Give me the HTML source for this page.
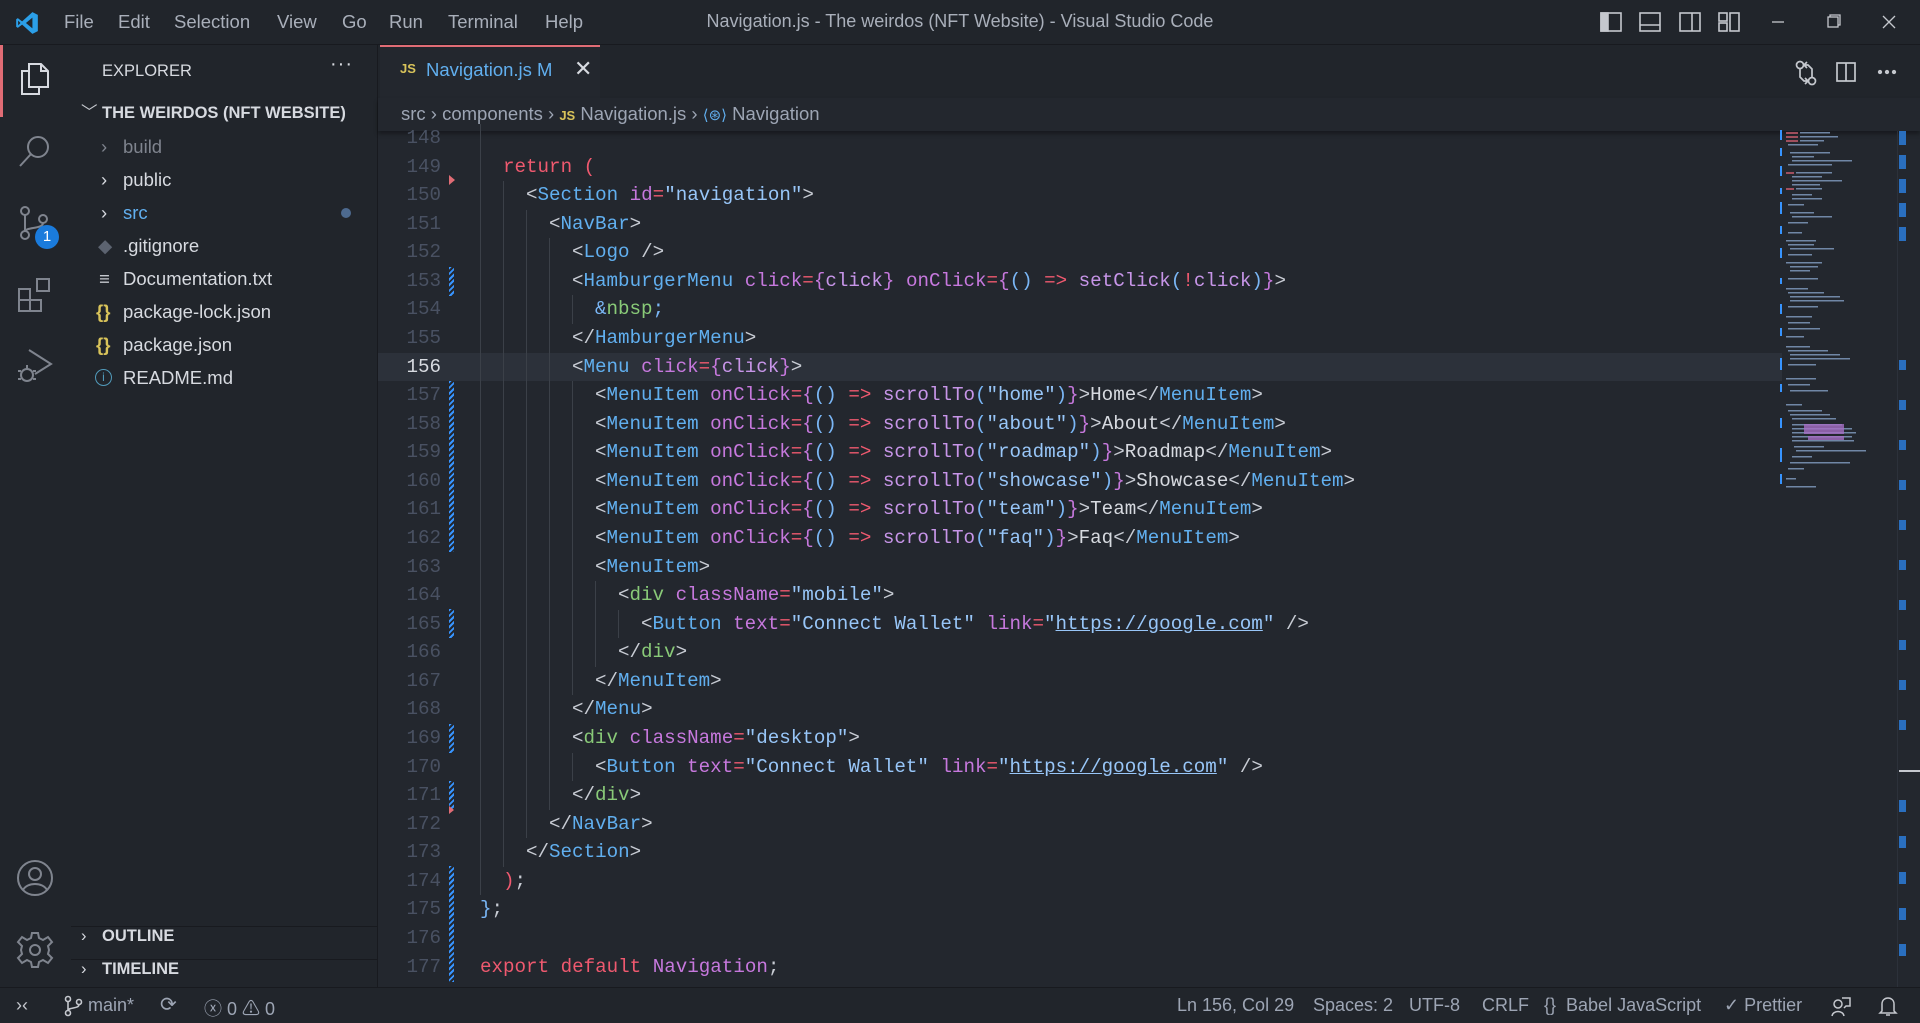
<!DOCTYPE html>
<html><head><meta charset="utf-8"><style>
*{margin:0;padding:0;box-sizing:border-box}
body{width:1920px;height:1023px;overflow:hidden;background:#23272e;font-family:"Liberation Sans",sans-serif;color:#d7dae0;position:relative}
.abs{position:absolute}
#title{left:0;top:0;width:1920px;height:45px;background:#21252b;border-bottom:1px solid #181a1f}
#title .m{position:absolute;top:11px;font-size:18.5px;color:#a9afba}
#title .t{position:absolute;top:11px;left:0;width:1920px;text-align:center;font-size:18px;color:#a9afba}
#act{left:0;top:45px;width:71px;height:942px;background:#21252b}
#side{left:71px;top:45px;width:307px;height:942px;background:#21252b;border-right:1px solid #181a1f}
.row{position:absolute;left:0;width:307px;height:33px;font-size:18.5px;line-height:33px;color:#d7dae0}
#tabs{left:378px;top:45px;width:1542px;height:53px;background:#21252b}
#tab{left:380px;top:45px;width:220px;height:53px;background:#23272e;border-top:2px solid #e06c75}
#crumb{left:378px;top:98px;width:1542px;height:33px;background:#23272e;font-size:18.5px;color:#9da5b4;box-shadow:0 3px 4px rgba(0,0,0,.35)}
#code{left:378px;top:124px;font-family:"Liberation Mono",monospace;font-size:19.2px}
.ln{position:absolute;left:0;width:1404px;height:28.57px;line-height:28.57px;white-space:pre}
.ln .n{position:absolute;left:0;width:63px;text-align:right;color:#495162}
.ln .c{position:absolute;left:102px;display:flex}
.ln.cur{background:#2c313a}
.ln.cur .n{color:#d7dae0}
i{display:inline-block;width:23px;height:28.57px;border-left:1px solid #3b4048}
.t{color:#61afef}.a{color:#c678dd}.o{color:#ef596f}.s{color:#98c6f8}.p{color:#c8ccd4}.b{color:#c678dd}.f{color:#c795e8}.k{color:#ef596f}.g{color:#89ca78}.w{color:#d7dae0}.pr{color:#7ab6f5}
.u{text-decoration:underline}
.dec{position:absolute;left:449px;width:5px;background:repeating-linear-gradient(135deg,#3794ff 0 2px,#23272e 2px 4px)}
#status{left:0;top:987px;width:1920px;height:36px;background:#21252b;border-top:1px solid #181a1f;font-size:18px;color:#9da5b4}
#status span{position:absolute;top:7px}
</style></head><body>

<div id="title" class="abs">
<svg class="abs" style="left:14px;top:10px" width="26" height="26" viewBox="0 0 24 24"><path d="M17 2 L22 4.5 V19.5 L17 22 L7.5 13.5 L3.5 16.5 L2 15.5 V8.5 L3.5 7.5 L7.5 10.5 Z M17 7 L11 12 L17 17 Z M3.8 9.8 V14.2 L6 12 Z" fill="#2b9fe8" fill-rule="evenodd"/></svg>
<span class="m" style="left:64px">File</span><span class="m" style="left:118px">Edit</span><span class="m" style="left:174px">Selection</span><span class="m" style="left:277px">View</span><span class="m" style="left:342px">Go</span><span class="m" style="left:389px">Run</span><span class="m" style="left:448px">Terminal</span><span class="m" style="left:545px">Help</span>
<div class="t">Navigation.js - The weirdos (NFT Website) - Visual Studio Code</div>
<svg class="abs" style="left:1600px;top:12px" width="150" height="22" fill="none" stroke="#c5c8ce" stroke-width="1.6">
<rect x="1" y="1" width="20" height="18"/><rect x="1" y="1" width="7" height="18" fill="#c5c8ce"/>
<rect x="40" y="1" width="20" height="18"/><line x1="40" y1="13" x2="60" y2="13"/>
<rect x="80" y="1" width="20" height="18"/><line x1="92" y1="1" x2="92" y2="19"/>
<rect x="119" y="1" width="8" height="8"/><rect x="119" y="11" width="8" height="8"/><rect x="130" y="1" width="9" height="18"/>
</svg>
<svg class="abs" style="left:1770px;top:14px" width="140" height="18" fill="none" stroke="#c5c8ce" stroke-width="1.3">
<line x1="2" y1="8" x2="14" y2="8"/><rect x="58" y="3" width="10" height="10"/><path d="M60 3 V1 H70 V11 H68"/><path d="M113 2 L125 14 M125 2 L113 14"/>
</svg>
</div>

<div id="act" class="abs">
<div class="abs" style="left:0;top:0;width:3px;height:72px;background:#e06c75"></div>
<svg class="abs" style="left:17px;top:16px" width="36" height="36" fill="none" stroke="#d7dae0" stroke-width="2"><path d="M12 3 H24 L31 10 V26 H12 Z M24 3 V10 H31"/><path d="M12 10 H5 V33 H22 V26"/></svg>
<svg class="abs" style="left:17px;top:88px" width="36" height="36" fill="none" stroke="#7f848e" stroke-width="2"><circle cx="21" cy="14" r="10"/><path d="M14 21 L3 33"/></svg>
<svg class="abs" style="left:17px;top:160px" width="36" height="36" fill="none" stroke="#7f848e" stroke-width="2"><circle cx="8" cy="6" r="4"/><circle cx="8" cy="30" r="4"/><circle cx="26" cy="14" r="4"/><path d="M8 10 V26 M26 18 C26 24 10 22 8 26"/></svg>
<div class="abs" style="left:35px;top:180px;width:24px;height:24px;border-radius:50%;background:#1a7bdc;color:#fff;font-size:15px;text-align:center;line-height:24px">1</div>
<svg class="abs" style="left:17px;top:232px" width="36" height="36" fill="none" stroke="#7f848e" stroke-width="2"><path d="M2 12 H13 V34 H2 Z M2 23 H24 V34 H13"/><rect x="20" y="2" width="12" height="12"/></svg>
<svg class="abs" style="left:17px;top:302px" width="38" height="38" fill="none" stroke="#7f848e" stroke-width="2"><path d="M12 3 L34 17 L18 27"/><circle cx="10" cy="28" r="6"/><path d="M4 24 H1 M4 32 H1 M16 24 H19 M16 32 H19 M10 22 V18"/></svg>
<svg class="abs" style="left:15px;top:813px" width="40" height="40" fill="none" stroke="#7f848e" stroke-width="2"><circle cx="20" cy="20" r="17"/><circle cx="20" cy="16" r="6"/><path d="M8 32 C12 24 28 24 32 32"/></svg>
<svg class="abs" style="left:15px;top:885px" width="40" height="40" fill="none" stroke="#7f848e" stroke-width="2"><circle cx="20" cy="20" r="5"/><path d="M17 3 H23 L24 8 L28 10 L33 7 L37 12 L33 16 L34 20 L33 24 L37 28 L33 33 L28 30 L24 32 L23 37 H17 L16 32 L12 30 L7 33 L3 28 L7 24 L6 20 L7 16 L3 12 L7 7 L12 10 L16 8 Z"/></svg>
</div>

<div id="side" class="abs">
<div class="abs" style="left:31px;top:17px;font-size:16.5px;color:#d7dae0">EXPLORER</div>
<div class="abs" style="left:259px;top:8px;font-size:20px;color:#d7dae0;letter-spacing:1px">···</div>
<div class="row" style="top:52px;font-weight:bold;font-size:16.5px"><span style="position:absolute;left:10px;color:#c5c8ce;font-weight:normal">﹀</span><span style="position:absolute;left:31px">THE WEIRDOS (NFT WEBSITE)</span></div>
<div class="row" style="top:85px;color:#7f848e"><span style="position:absolute;left:30px">›</span><span style="position:absolute;left:52px">build</span></div>
<div class="row" style="top:118px"><span style="position:absolute;left:30px">›</span><span style="position:absolute;left:52px">public</span></div>
<div class="row" style="top:151px;color:#61afef"><span style="position:absolute;left:30px;color:#d7dae0">›</span><span style="position:absolute;left:52px">src</span><span style="position:absolute;left:270px;top:12px;width:10px;height:10px;border-radius:50%;background:#4d6a8f"></span></div>
<div class="row" style="top:184px"><span style="position:absolute;left:27px;color:#5c6370">◆</span><span style="position:absolute;left:52px">.gitignore</span></div>
<div class="row" style="top:217px"><span style="position:absolute;left:28px;color:#c5c8ce">≡</span><span style="position:absolute;left:52px">Documentation.txt</span></div>
<div class="row" style="top:250px"><span style="position:absolute;left:25px;color:#d8c35a;font-weight:bold">{}</span><span style="position:absolute;left:52px">package-lock.json</span></div>
<div class="row" style="top:283px"><span style="position:absolute;left:25px;color:#d8c35a;font-weight:bold">{}</span><span style="position:absolute;left:52px">package.json</span></div>
<div class="row" style="top:316px"><span style="position:absolute;left:24px;top:8px;width:17px;height:17px;border:1.5px solid #519aba;border-radius:50%;color:#519aba;font-size:12px;line-height:14px;text-align:center">i</span><span style="position:absolute;left:52px">README.md</span></div>
<div class="abs" style="left:0;top:881px;width:307px;height:1px;background:#181a1f"></div>
<div class="row" style="top:876px;font-weight:bold;font-size:16.5px;height:30px;line-height:30px"><span style="position:absolute;left:10px;font-weight:normal">›</span><span style="position:absolute;left:31px">OUTLINE</span></div>
<div class="abs" style="left:0;top:914px;width:307px;height:1px;background:#181a1f"></div>
<div class="row" style="top:909px;font-weight:bold;font-size:16.5px;height:30px;line-height:30px"><span style="position:absolute;left:10px;font-weight:normal">›</span><span style="position:absolute;left:31px">TIMELINE</span></div>
</div>

<div id="tabs" class="abs"></div>
<div id="tab" class="abs"><span class="abs" style="left:20px;top:14px;font-size:13px;font-weight:bold;color:#d8c35a">JS</span><span class="abs" style="left:46px;top:12px;font-size:18.5px;color:#61afef">Navigation.js M</span><span class="abs" style="left:194px;top:9px;font-size:22px;color:#d7dae0">✕</span></div>
<svg class="abs" style="left:1795px;top:60px" width="110" height="26" fill="none" stroke="#c5c8ce" stroke-width="1.7">
<circle cx="5" cy="5" r="3.5"/><circle cx="17" cy="21" r="3.5"/><path d="M5 9 V17 L9 21 H13 M17 17 V9 L13 5 H10 M12 2 L9 5 L12 8 M10 18 L13 21 L10 24"/>
<rect x="42" y="3" width="18" height="18"/><line x1="51" y1="3" x2="51" y2="21"/>
<circle cx="85" cy="12" r="1.3" fill="#c5c8ce"/><circle cx="92" cy="12" r="1.3" fill="#c5c8ce"/><circle cx="99" cy="12" r="1.3" fill="#c5c8ce"/>
</svg>

<div id="crumb" class="abs"><span class="abs" style="left:23px;top:5px">src › components › <b style="font-size:13px;color:#d8c35a">JS</b> Navigation.js › <span style="color:#61afef;font-size:15px">⟨⊛⟩</span> Navigation</span></div>

<div id="code" class="abs">
<div class="ln" style="top:0"><span class="n">148</span><span class="c"><i></i></span></div>
<div class="ln" style="top:28.57px"><span class="n">149</span><span class="c"><i></i><span class="k">return </span><span class="o">(</span></span></div>
<div class="ln" style="top:57.14px"><span class="n">150</span><span class="c"><i></i><i></i><span class="p">&lt;</span><span class="t">Section </span><span class="a">id</span><span class="o">=</span><span class="s">"navigation"</span><span class="p">&gt;</span></span></div>
<div class="ln" style="top:85.71px"><span class="n">151</span><span class="c"><i></i><i></i><i></i><span class="p">&lt;</span><span class="t">NavBar</span><span class="p">&gt;</span></span></div>
<div class="ln" style="top:114.28px"><span class="n">152</span><span class="c"><i></i><i></i><i></i><i></i><span class="p">&lt;</span><span class="t">Logo </span><span class="p">/&gt;</span></span></div>
<div class="ln" style="top:142.85px"><span class="n">153</span><span class="c"><i></i><i></i><i></i><i></i><span class="p">&lt;</span><span class="t">HamburgerMenu </span><span class="a">click</span><span class="o">=</span><span class="b">{</span><span class="f">click</span><span class="b">} </span><span class="a">onClick</span><span class="o">=</span><span class="b">{</span><span class="pr">() </span><span class="o">=&gt; </span><span class="f">setClick</span><span class="pr">(</span><span class="o">!</span><span class="f">click</span><span class="pr">)</span><span class="b">}</span><span class="p">&gt;</span></span></div>
<div class="ln" style="top:171.42px"><span class="n">154</span><span class="c"><i></i><i></i><i></i><i></i><i></i><span class="pr">&amp;</span><span class="g">nbsp</span><span class="pr">;</span></span></div>
<div class="ln" style="top:199.99px"><span class="n">155</span><span class="c"><i></i><i></i><i></i><i></i><span class="p">&lt;/</span><span class="t">HamburgerMenu</span><span class="p">&gt;</span></span></div>
<div class="ln cur" style="top:228.56px"><span class="n">156</span><span class="c"><i></i><i></i><i></i><i></i><span class="p">&lt;</span><span class="t">Menu </span><span class="a">click</span><span class="o">=</span><span class="b">{</span><span class="f">click</span><span class="b">}</span><span class="p">&gt;</span></span></div>
<div class="ln" style="top:257.13px"><span class="n">157</span><span class="c"><i></i><i></i><i></i><i></i><i></i><span class="p">&lt;</span><span class="t">MenuItem </span><span class="a">onClick</span><span class="o">=</span><span class="b">{</span><span class="pr">() </span><span class="o">=&gt; </span><span class="f">scrollTo</span><span class="pr">(</span><span class="s">"home"</span><span class="pr">)</span><span class="b">}</span><span class="p">&gt;</span><span class="w">Home</span><span class="p">&lt;/</span><span class="t">MenuItem</span><span class="p">&gt;</span></span></div>
<div class="ln" style="top:285.7px"><span class="n">158</span><span class="c"><i></i><i></i><i></i><i></i><i></i><span class="p">&lt;</span><span class="t">MenuItem </span><span class="a">onClick</span><span class="o">=</span><span class="b">{</span><span class="pr">() </span><span class="o">=&gt; </span><span class="f">scrollTo</span><span class="pr">(</span><span class="s">"about"</span><span class="pr">)</span><span class="b">}</span><span class="p">&gt;</span><span class="w">About</span><span class="p">&lt;/</span><span class="t">MenuItem</span><span class="p">&gt;</span></span></div>
<div class="ln" style="top:314.27px"><span class="n">159</span><span class="c"><i></i><i></i><i></i><i></i><i></i><span class="p">&lt;</span><span class="t">MenuItem </span><span class="a">onClick</span><span class="o">=</span><span class="b">{</span><span class="pr">() </span><span class="o">=&gt; </span><span class="f">scrollTo</span><span class="pr">(</span><span class="s">"roadmap"</span><span class="pr">)</span><span class="b">}</span><span class="p">&gt;</span><span class="w">Roadmap</span><span class="p">&lt;/</span><span class="t">MenuItem</span><span class="p">&gt;</span></span></div>
<div class="ln" style="top:342.84px"><span class="n">160</span><span class="c"><i></i><i></i><i></i><i></i><i></i><span class="p">&lt;</span><span class="t">MenuItem </span><span class="a">onClick</span><span class="o">=</span><span class="b">{</span><span class="pr">() </span><span class="o">=&gt; </span><span class="f">scrollTo</span><span class="pr">(</span><span class="s">"showcase"</span><span class="pr">)</span><span class="b">}</span><span class="p">&gt;</span><span class="w">Showcase</span><span class="p">&lt;/</span><span class="t">MenuItem</span><span class="p">&gt;</span></span></div>
<div class="ln" style="top:371.41px"><span class="n">161</span><span class="c"><i></i><i></i><i></i><i></i><i></i><span class="p">&lt;</span><span class="t">MenuItem </span><span class="a">onClick</span><span class="o">=</span><span class="b">{</span><span class="pr">() </span><span class="o">=&gt; </span><span class="f">scrollTo</span><span class="pr">(</span><span class="s">"team"</span><span class="pr">)</span><span class="b">}</span><span class="p">&gt;</span><span class="w">Team</span><span class="p">&lt;/</span><span class="t">MenuItem</span><span class="p">&gt;</span></span></div>
<div class="ln" style="top:399.98px"><span class="n">162</span><span class="c"><i></i><i></i><i></i><i></i><i></i><span class="p">&lt;</span><span class="t">MenuItem </span><span class="a">onClick</span><span class="o">=</span><span class="b">{</span><span class="pr">() </span><span class="o">=&gt; </span><span class="f">scrollTo</span><span class="pr">(</span><span class="s">"faq"</span><span class="pr">)</span><span class="b">}</span><span class="p">&gt;</span><span class="w">Faq</span><span class="p">&lt;/</span><span class="t">MenuItem</span><span class="p">&gt;</span></span></div>
<div class="ln" style="top:428.55px"><span class="n">163</span><span class="c"><i></i><i></i><i></i><i></i><i></i><span class="p">&lt;</span><span class="t">MenuItem</span><span class="p">&gt;</span></span></div>
<div class="ln" style="top:457.12px"><span class="n">164</span><span class="c"><i></i><i></i><i></i><i></i><i></i><i></i><span class="p">&lt;</span><span class="g">div </span><span class="a">className</span><span class="o">=</span><span class="s">"mobile"</span><span class="p">&gt;</span></span></div>
<div class="ln" style="top:485.69px"><span class="n">165</span><span class="c"><i></i><i></i><i></i><i></i><i></i><i></i><i></i><span class="p">&lt;</span><span class="t">Button </span><span class="a">text</span><span class="o">=</span><span class="s">"Connect Wallet" </span><span class="a">link</span><span class="o">=</span><span class="s">"<span class="u">https://google.com</span>" </span><span class="p">/&gt;</span></span></div>
<div class="ln" style="top:514.26px"><span class="n">166</span><span class="c"><i></i><i></i><i></i><i></i><i></i><i></i><span class="p">&lt;/</span><span class="g">div</span><span class="p">&gt;</span></span></div>
<div class="ln" style="top:542.83px"><span class="n">167</span><span class="c"><i></i><i></i><i></i><i></i><i></i><span class="p">&lt;/</span><span class="t">MenuItem</span><span class="p">&gt;</span></span></div>
<div class="ln" style="top:571.4px"><span class="n">168</span><span class="c"><i></i><i></i><i></i><i></i><span class="p">&lt;/</span><span class="t">Menu</span><span class="p">&gt;</span></span></div>
<div class="ln" style="top:599.97px"><span class="n">169</span><span class="c"><i></i><i></i><i></i><i></i><span class="p">&lt;</span><span class="g">div </span><span class="a">className</span><span class="o">=</span><span class="s">"desktop"</span><span class="p">&gt;</span></span></div>
<div class="ln" style="top:628.54px"><span class="n">170</span><span class="c"><i></i><i></i><i></i><i></i><i></i><span class="p">&lt;</span><span class="t">Button </span><span class="a">text</span><span class="o">=</span><span class="s">"Connect Wallet" </span><span class="a">link</span><span class="o">=</span><span class="s">"<span class="u">https://google.com</span>" </span><span class="p">/&gt;</span></span></div>
<div class="ln" style="top:657.11px"><span class="n">171</span><span class="c"><i></i><i></i><i></i><i></i><span class="p">&lt;/</span><span class="g">div</span><span class="p">&gt;</span></span></div>
<div class="ln" style="top:685.68px"><span class="n">172</span><span class="c"><i></i><i></i><i></i><span class="p">&lt;/</span><span class="t">NavBar</span><span class="p">&gt;</span></span></div>
<div class="ln" style="top:714.25px"><span class="n">173</span><span class="c"><i></i><i></i><span class="p">&lt;/</span><span class="t">Section</span><span class="p">&gt;</span></span></div>
<div class="ln" style="top:742.82px"><span class="n">174</span><span class="c"><i></i><span class="o">)</span><span class="p">;</span></span></div>
<div class="ln" style="top:771.39px"><span class="n">175</span><span class="c"><span class="pr">}</span><span class="p">;</span></span></div>
<div class="ln" style="top:799.96px"><span class="n">176</span><span class="c"></span></div>
<div class="ln" style="top:828.53px"><span class="n">177</span><span class="c"><span class="k">export default </span><span class="a">Navigation</span><span class="p">;</span></span></div>
</div>

<div class="dec" style="top:267px;height:29px"></div>
<div class="dec" style="top:381px;height:171px"></div>
<div class="dec" style="top:609px;height:29px"></div>
<div class="dec" style="top:724px;height:29px"></div>
<div class="dec" style="top:781px;height:29px"></div>
<div class="dec" style="top:866px;height:116px"></div>
<div class="abs" style="left:449px;top:175px;width:0;height:0;border-left:6px solid #e06c75;border-top:5px solid transparent;border-bottom:5px solid transparent"></div>
<div class="abs" style="left:449px;top:806px;width:0;height:0;border-left:5px solid #e06c75;border-top:4px solid transparent;border-bottom:4px solid transparent"></div>

<!-- minimap -->
<svg class="abs" style="left:1778px;top:128px" width="100" height="370">
<g fill="#3794ff"><rect x="2" y="2" width="2" height="10"/><rect x="2" y="20" width="2" height="8"/><rect x="2" y="38" width="2" height="10"/><rect x="2" y="60" width="2" height="6"/><rect x="2" y="74" width="2" height="12"/><rect x="2" y="98" width="2" height="8"/><rect x="2" y="120" width="2" height="10"/><rect x="2" y="150" width="2" height="6"/><rect x="2" y="176" width="2" height="10"/><rect x="2" y="200" width="2" height="8"/><rect x="2" y="230" width="2" height="12"/><rect x="2" y="256" width="2" height="8"/><rect x="2" y="290" width="2" height="10"/><rect x="2" y="320" width="2" height="14"/><rect x="2" y="346" width="2" height="10"/></g>
<g fill="#c05a6a" opacity=".8"><rect x="8" y="4" width="12" height="2"/><rect x="8" y="8" width="12" height="2"/><rect x="8" y="12" width="12" height="2"/><rect x="8" y="44" width="8" height="2"/><rect x="8" y="60" width="8" height="2"/></g>
<g fill="#8aa7cf" opacity=".75">
<rect x="22" y="4" width="30" height="1.5"/><rect x="22" y="8" width="38" height="1.5"/><rect x="22" y="12" width="24" height="1.5"/><rect x="10" y="16" width="30" height="1.5"/>
<rect x="12" y="24" width="40" height="1.5"/><rect x="14" y="28" width="22" height="1.5"/><rect x="14" y="32" width="60" height="1.5"/><rect x="10" y="36" width="44" height="1.5"/>
<rect x="18" y="44" width="36" height="1.5"/><rect x="14" y="48" width="30" height="1.5"/><rect x="14" y="52" width="50" height="1.5"/><rect x="14" y="56" width="28" height="1.5"/>
<rect x="18" y="60" width="26" height="1.5"/><rect x="14" y="66" width="20" height="1.5"/><rect x="14" y="70" width="30" height="1.5"/><rect x="10" y="76" width="16" height="1.5"/>
<rect x="12" y="84" width="24" height="1.5"/><rect x="14" y="88" width="40" height="1.5"/><rect x="10" y="94" width="20" height="1.5"/><rect x="10" y="104" width="14" height="1.5"/>
<rect x="8" y="112" width="30" height="1.5"/><rect x="10" y="116" width="26" height="1.5"/><rect x="12" y="120" width="44" height="1.5"/><rect x="10" y="126" width="24" height="1.5"/>
<rect x="8" y="134" width="36" height="1.5"/><rect x="12" y="138" width="28" height="1.5"/><rect x="12" y="142" width="20" height="1.5"/><rect x="10" y="150" width="30" height="1.5"/>
<rect x="8" y="160" width="22" height="1.5"/><rect x="10" y="164" width="36" height="1.5"/><rect x="12" y="168" width="50" height="1.5"/><rect x="12" y="172" width="54" height="1.5"/><rect x="10" y="178" width="30" height="1.5"/>
<rect x="8" y="188" width="26" height="1.5"/><rect x="10" y="194" width="22" height="1.5"/><rect x="10" y="200" width="32" height="1.5"/><rect x="8" y="208" width="18" height="1.5"/>
<rect x="8" y="218" width="24" height="1.5"/><rect x="10" y="222" width="40" height="1.5"/><rect x="12" y="226" width="50" height="1.5"/><rect x="12" y="230" width="60" height="1.5"/><rect x="10" y="236" width="28" height="1.5"/>
<rect x="8" y="250" width="30" height="1.5"/><rect x="10" y="256" width="22" height="1.5"/><rect x="12" y="262" width="38" height="1.5"/>
<rect x="8" y="276" width="16" height="1.5"/><rect x="10" y="282" width="34" height="1.5"/><rect x="12" y="286" width="40" height="1.5"/><rect x="14" y="290" width="44" height="1.5"/>
<rect x="14" y="296" width="50" height="1.5"/><rect x="14" y="300" width="60" height="1.5"/><rect x="14" y="304" width="64" height="1.5"/><rect x="14" y="308" width="60" height="1.5"/><rect x="14" y="312" width="62" height="1.5"/>
<rect x="16" y="318" width="30" height="1.5"/><rect x="18" y="322" width="70" height="1.5"/><rect x="14" y="328" width="20" height="1.5"/><rect x="12" y="334" width="60" height="1.5"/><rect x="10" y="340" width="16" height="1.5"/>
<rect x="8" y="350" width="10" height="1.5"/><rect x="8" y="358" width="30" height="1.5"/></g>
<g fill="#a66fc4" opacity=".8"><rect x="26" y="296" width="40" height="10"/><rect x="30" y="308" width="36" height="4"/></g>
</svg>
<div class="abs" style="left:1897px;top:131px;width:9px;height:856px;border-left:1px solid #2c313a"></div>
<div class="abs" style="left:1899px;top:131px;width:7px;height:120px;background:repeating-linear-gradient(#2a6fbf 0 14px,transparent 14px 24px)"></div>
<div class="abs" style="left:1899px;top:360px;width:7px;height:370px;background:repeating-linear-gradient(#2a6fbf 0 10px,transparent 10px 40px)"></div>
<div class="abs" style="left:1899px;top:770px;width:21px;height:2px;background:#c5c8ce"></div>
<div class="abs" style="left:1899px;top:800px;width:7px;height:170px;background:repeating-linear-gradient(#2a6fbf 0 12px,transparent 12px 36px)"></div>

<div id="status" class="abs">
<span style="left:16px;color:#c5c8ce">›‹</span>
<svg class="abs" style="left:63px;top:7px" width="22" height="22" fill="none" stroke="#c5c8ce" stroke-width="1.6"><circle cx="5" cy="4" r="2.5"/><circle cx="5" cy="18" r="2.5"/><circle cx="16" cy="7" r="2.5"/><path d="M5 6.5 V15.5 M16 9.5 C16 14 6 12 5 15.5"/></svg>
<span style="left:88px">main*</span>
<span style="left:160px;font-size:20px;top:4px">⟳</span>
<span style="left:204px">ⓧ 0 ⚠ 0</span>
<span style="left:1177px">Ln 156, Col 29</span>
<span style="left:1313px">Spaces: 2</span>
<span style="left:1409px">UTF-8</span>
<span style="left:1482px">CRLF</span>
<span style="left:1544px">{}&nbsp; Babel JavaScript</span>
<span style="left:1724px">✓ Prettier</span>
<svg class="abs" style="left:1830px;top:8px" width="22" height="22" fill="none" stroke="#c5c8ce" stroke-width="1.5"><circle cx="8" cy="8" r="4"/><path d="M2 20 C3 14 13 14 14 20 M12 2 H20 V10 H16 L14 12"/></svg>
<svg class="abs" style="left:1878px;top:7px" width="20" height="22" fill="none" stroke="#c5c8ce" stroke-width="1.5"><path d="M4 16 V9 C4 5 7 3 10 3 C13 3 16 5 16 9 V16 L18 18 H2 Z M8 20 H12"/></svg>
</div>
</body></html>
